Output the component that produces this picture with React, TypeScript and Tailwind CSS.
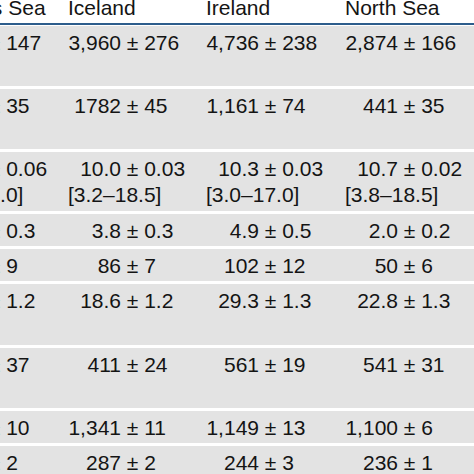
type Cell = { left: string; right: string; range?: string };

interface Row {
  h: string;
  cells: Cell[];
}

const c = (left: string, right: string, range?: string): Cell => ({ left, right, range });

const headers = ["Barents Sea", "Iceland", "Ireland", "North Sea"];

const rows: Row[] = [
  { h: "h-[60px]", cells: [c("4,105", "147"), c("3,960", "276"), c("4,736", "238"), c("2,874", "166")] },
  { h: "h-[60px]", cells: [c("1,392", "35"), c("1782", "45"), c("1,161", "74"), c("441", "35")] },
  {
    h: "h-[59px]",
    cells: [
      c("10.1", "0.06", "[3.1–17.0]"),
      c("10.0", "0.03", "[3.2–18.5]"),
      c("10.3", "0.03", "[3.0–17.0]"),
      c("10.7", "0.02", "[3.8–18.5]"),
    ],
  },
  { h: "h-[32px]", cells: [c("4.6", "0.3"), c("3.8", "0.3"), c("4.9", "0.5"), c("2.0", "0.2")] },
  { h: "h-[32px]", cells: [c("94", "9"), c("86", "7"), c("102", "12"), c("50", "6")] },
  { h: "h-[61px]", cells: [c("25.0", "1.2"), c("18.6", "1.2"), c("29.3", "1.3"), c("22.8", "1.3")] },
  { h: "h-[60px]", cells: [c("505", "37"), c("411", "24"), c("561", "19"), c("541", "31")] },
  { h: "h-[32px]", cells: [c("1,226", "10"), c("1,341", "11"), c("1,149", "13"), c("1,100", "6")] },
  { h: "h-[40px]", cells: [c("263", "2"), c("287", "2"), c("244", "3"), c("236", "1")] },
];

const cols = "grid grid-cols-[138px_138px_139px_129px]";

function ValueCell({ cell }: { cell: Cell }) {
  return (
    <div className="flex flex-col">
      <div className="flex whitespace-pre">
        <span className="w-[53px] text-right">{cell.left}</span>
        <span>{" ± " + cell.right}</span>
      </div>
      {cell.range && <div className="whitespace-pre">{cell.range}</div>}
    </div>
  );
}

export default function App() {
  return (
    <div
      className="w-[474px] h-[474px] overflow-hidden bg-white text-[21px] leading-[26px] text-[#141414]"
      style={{ fontFamily: '"Liberation Sans", Arial, sans-serif' }}
    >
      <div className="-ml-[70px] w-[544px]">
        <div className={`${cols} grid-rows-[21px] h-[25px] items-end pb-[2px] border-b-2 border-[#2d5d8c]`}>
          {headers.map((t) => (
            <div key={t} className="whitespace-pre">
              {t}
            </div>
          ))}
        </div>
        <div className="mt-[1px] flex flex-col gap-[3px]">
          {rows.map((r, i) => (
            <div key={i} className={`${cols} ${r.h} bg-[#e3e3e3] pt-[4px]`}>
              {r.cells.map((cell, j) => (
                <ValueCell key={j} cell={cell} />
              ))}
            </div>
          ))}
        </div>
      </div>
    </div>
  );
}
